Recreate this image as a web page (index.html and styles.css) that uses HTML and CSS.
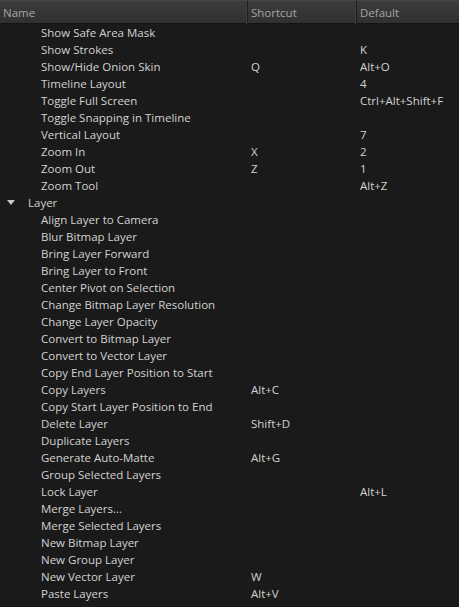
FILE: index.html
```html
<!DOCTYPE html>
<html>
<head>
<meta charset="utf-8">
<link rel="stylesheet" href="styles.css">
</head>
<body>
<div class="table">
  <div class="header">
    <div class="hcell">Name</div>
    <div class="hcell">Shortcut</div>
    <div class="hcell">Default</div>
  </div>
  <div class="rows">
    <div class="row"><span class="name child">Show Safe Area Mask</span><span></span><span></span></div>
    <div class="row"><span class="name child">Show Strokes</span><span></span><span>K</span></div>
    <div class="row"><span class="name child">Show/Hide Onion Skin</span><span>Q</span><span>Alt+O</span></div>
    <div class="row"><span class="name child">Timeline Layout</span><span></span><span>4</span></div>
    <div class="row"><span class="name child">Toggle Full Screen</span><span></span><span>Ctrl+Alt+Shift+F</span></div>
    <div class="row"><span class="name child">Toggle Snapping in Timeline</span><span></span><span></span></div>
    <div class="row"><span class="name child">Vertical Layout</span><span></span><span>7</span></div>
    <div class="row"><span class="name child">Zoom In</span><span>X</span><span>2</span></div>
    <div class="row"><span class="name child">Zoom Out</span><span>Z</span><span>1</span></div>
    <div class="row"><span class="name child">Zoom Tool</span><span></span><span>Alt+Z</span></div>
    <div class="row"><span class="name group"><svg class="arrow" width="8" height="5" viewBox="0 0 8 5"><polygon points="0,0 8,0 4,5" fill="#c8c8c8"/></svg>Layer</span><span></span><span></span></div>
    <div class="row"><span class="name child">Align Layer to Camera</span><span></span><span></span></div>
    <div class="row"><span class="name child">Blur Bitmap Layer</span><span></span><span></span></div>
    <div class="row"><span class="name child">Bring Layer Forward</span><span></span><span></span></div>
    <div class="row"><span class="name child">Bring Layer to Front</span><span></span><span></span></div>
    <div class="row"><span class="name child">Center Pivot on Selection</span><span></span><span></span></div>
    <div class="row"><span class="name child">Change Bitmap Layer Resolution</span><span></span><span></span></div>
    <div class="row"><span class="name child">Change Layer Opacity</span><span></span><span></span></div>
    <div class="row"><span class="name child">Convert to Bitmap Layer</span><span></span><span></span></div>
    <div class="row"><span class="name child">Convert to Vector Layer</span><span></span><span></span></div>
    <div class="row"><span class="name child">Copy End Layer Position to Start</span><span></span><span></span></div>
    <div class="row"><span class="name child">Copy Layers</span><span>Alt+C</span><span></span></div>
    <div class="row"><span class="name child">Copy Start Layer Position to End</span><span></span><span></span></div>
    <div class="row"><span class="name child">Delete Layer</span><span>Shift+D</span><span></span></div>
    <div class="row"><span class="name child">Duplicate Layers</span><span></span><span></span></div>
    <div class="row"><span class="name child">Generate Auto-Matte</span><span>Alt+G</span><span></span></div>
    <div class="row"><span class="name child">Group Selected Layers</span><span></span><span></span></div>
    <div class="row"><span class="name child">Lock Layer</span><span></span><span>Alt+L</span></div>
    <div class="row"><span class="name child">Merge Layers...</span><span></span><span></span></div>
    <div class="row"><span class="name child">Merge Selected Layers</span><span></span><span></span></div>
    <div class="row"><span class="name child">New Bitmap Layer</span><span></span><span></span></div>
    <div class="row"><span class="name child">New Group Layer</span><span></span><span></span></div>
    <div class="row"><span class="name child">New Vector Layer</span><span>W</span><span></span></div>
    <div class="row"><span class="name child">Paste Layers</span><span>Alt+V</span><span></span></div>
    <div class="row"><span class="name child">Rename Layer</span><span></span><span></span></div>
  </div>
</div>
</body>
</html>
```
FILE: styles.css
```css
html, body {
  margin: 0;
  padding: 0;
  background: #1a1a1a;
  overflow: hidden;
  height: 607px;
}
.table {
  font-family: "Open Sans", "Noto Sans", sans-serif;
  font-size: 11.5px;
  color: #d2d2d2;
}
.header {
  display: grid;
  grid-template-columns: 248px 109px 1fr;
  background: linear-gradient(#3c3c3c, #303030);
  border-top: 1px solid #454545;
  border-bottom: 1px solid #141414;
  box-sizing: border-box;
  height: 24px;
}
.hcell {
  color: #a6a6a6;
  padding-left: 3px;
  line-height: 23px;
  border-right: 1px solid #1e1e1e;
  box-shadow: inset -1px 0 0 #3e3e3e;
  font-size: 11.5px;
}
.hcell:last-child { border-right: none; box-shadow: none; }
.row {
  display: grid;
  grid-template-columns: 248px 109px 1fr;
  height: 17px;
  line-height: 17px;
  white-space: nowrap;
}
.row span { padding-left: 3px; overflow: hidden; }
.row .child { padding-left: 41px; }
.row .group { padding-left: 7px; display: flex; align-items: center; }
.arrow { margin-right: 13px; }
```
